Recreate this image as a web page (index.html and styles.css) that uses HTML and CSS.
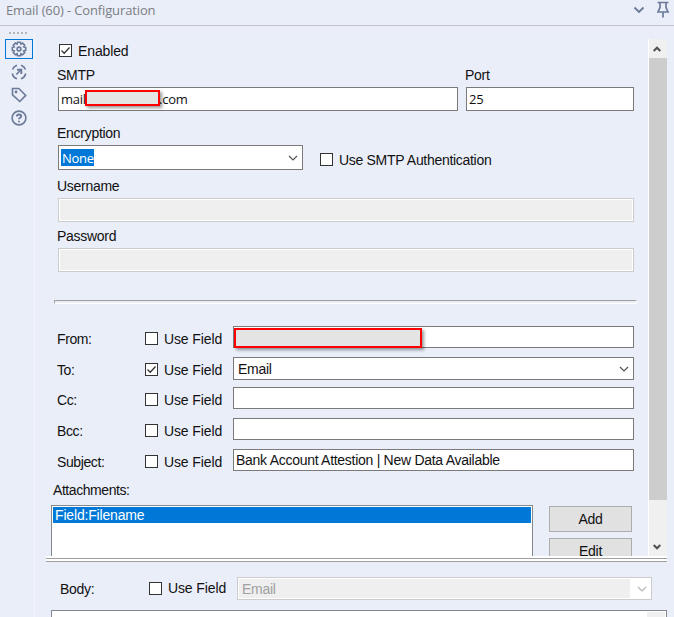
FILE: index.html
```html
<!DOCTYPE html>
<html lang="en">
<head>
<meta charset="utf-8">
<title>Email (60) - Configuration</title>
<link rel="stylesheet" href="styles.css">
</head>
<body>
<header class="titlebar">
  <span class="title">Email (60) - Configuration</span>
  <svg class="title-chevron" width="12" height="8" viewBox="0 0 12 8"><path d="M1.500 1.500 6 6l4.500-4.500"/></svg>
  <svg class="title-pin" width="14" height="18" viewBox="0 0 14 18"><path d="M1.500 2.500h11M4 3v4.500L2 12h10L10 7.500V3M7 12v5.500"/></svg>
</header>
<div class="window">
  <nav class="tools">
    <div class="grip"><i></i><i></i><i></i><i></i><i></i></div>
    <div class="tool active"><svg width="16" height="16" viewBox="0 0 16 16"><path d="M6.600 1.200h2.800l.5 1.900 1.700-1 2.100 2-1 1.700 2 .6v2.900l-2 .6 1 1.700-2.100 2.100-1.700-1-.5 2H6.600l-.5-2-1.700 1-2.100-2.100 1-1.700-2-.6V6.400l2-.6-1-1.700 2.100-2 1.700 1z"/><circle cx="8" cy="8" r="1.900"/></svg></div>
    <div class="tool"><svg width="16" height="16" viewBox="0 0 16 16"><path d="M6 1.200A7 7 0 0 0 1.500 5.500M10 1.200a7 7 0 0 1 4.500 4.300M1.300 9.500A7 7 0 0 0 6 14.700M14.700 9.500a7 7 0 0 1-4.700 5.200M5.300 10.500l4.500-4.500"/><path class="bold" d="M6 5.700h4.300V10"/></svg></div>
    <div class="tool"><svg width="16" height="16" viewBox="0 0 16 16"><path d="M1.500 1.500h6.300l6.900 6.900-5.900 6.100L1.500 7.800z"/><circle class="solid" cx="5" cy="5" r="1.400"/></svg></div>
    <div class="tool"><svg width="16" height="16" viewBox="0 0 16 16"><circle cx="8" cy="8" r="6.900"/><path class="bold" d="M5.900 6.500c0-2.800 4.300-2.600 4.300-.2 0 1.500-2.200 1.500-2.200 3M8 10.700v1.600"/></svg></div>
  </nav>
  <main class="content">
    <div class="pane">
      <form class="form">
        <div class="enabled-row">
          <span class="check"><svg viewBox="0 0 11 11"><path d="M1.500 5.500 4.200 8.200 9.500 2.500"/></svg></span><span class="check-label">Enabled</span>
        </div>
        <div class="server-row">
          <div class="group smtp">
            <label class="caption">SMTP</label>
            <div class="input tall ui-text"><span class="mail">mail</span><span>.com</span><span class="mask mask-host"></span></div>
          </div>
          <div class="group port">
            <label class="caption">Port</label>
            <div class="input tall ui-text digits">25</div>
          </div>
        </div>
        <div class="encryption-row">
          <div class="group encryption">
            <label class="caption">Encryption</label>
            <div class="input select ui-text"><span class="selected">None</span><svg class="arrow" viewBox="0 0 10 6"><path d="M1 1l4 4 4-4"/></svg></div>
          </div>
          <div class="auth"><span class="check"></span><span class="check-label">Use SMTP Authentication</span></div>
        </div>
        <div class="group username">
          <label class="caption">Username</label>
          <div class="input tall disabled"></div>
        </div>
        <div class="group password">
          <label class="caption">Password</label>
          <div class="input tall disabled"></div>
        </div>
        <div class="divider"></div>
        <div class="fields">
          <div class="field"><span class="name">From:</span><span class="check"></span><span class="check-label">Use Field</span><div class="input"><span class="mask mask-from"></span></div></div>
          <div class="field to"><span class="name">To:</span><span class="check"><svg viewBox="0 0 11 11"><path d="M1.500 5.500 4.200 8.200 9.500 2.500"/></svg></span><span class="check-label">Use Field</span><div class="input"><span class="value">Email</span><svg class="arrow" viewBox="0 0 10 6"><path d="M1 1l4 4 4-4"/></svg></div></div>
          <div class="field"><span class="name">Cc:</span><span class="check"></span><span class="check-label">Use Field</span><div class="input"></div></div>
          <div class="field"><span class="name">Bcc:</span><span class="check"></span><span class="check-label">Use Field</span><div class="input"></div></div>
          <div class="field"><span class="name">Subject:</span><span class="check"></span><span class="check-label">Use Field</span><div class="input"><span class="subject">Bank Account Attestion | New Data Available</span></div></div>
        </div>
        <div class="attachments-title">Attachments:</div>
        <div class="attachments">
          <div class="list"><div class="item">Field:Filename</div></div>
          <div class="buttons"><div class="button">Add</div><div class="button">Edit</div></div>
        </div>
      </form>
      <div class="scrollbar">
        <svg class="up" viewBox="0 0 8 6"><path d="M.700 5 4 1.700 7.300 5"/></svg>
        <div class="thumb"></div>
        <svg class="down" viewBox="0 0 8 6"><path d="M.700 1 4 4.300 7.300 1"/></svg>
      </div>
    </div>
    <div class="splitter"></div>
    <div class="body-row">
      <span class="name">Body:</span><span class="check"></span><span class="check-label">Use Field</span>
      <div class="body-select"><span class="body-value">Email</span><svg class="arrow" viewBox="0 0 10 6"><path d="M1 1l4 4 4-4"/></svg></div>
    </div>
    <div class="editor"><div class="editor-scroll"></div></div>
  </main>
</div>
</body>
</html>
```

FILE: styles.css
```css
* { box-sizing: border-box; }
body {
  margin: 0;
  width: 674px;
  height: 617px;
  overflow: hidden;
  background: #eaeef9;
  color: #111;
  font: 14px/20px "Liberation Sans", sans-serif;
  letter-spacing: -0.28px;
  white-space: nowrap;
}
svg { fill: none; display: block; flex: none; }

.titlebar {
  display: flex;
  height: 26px;
  padding-left: 6px;
  border-bottom: 1px solid #c3c5cb;
}
.title {
  width: 627px;
  color: #7b7d83;
  font: 13px/21px "Open Sans", sans-serif;
  letter-spacing: -0.13px;
}
.title-chevron { margin-top: 6px; stroke: #6b7a99; stroke-width: 1.9; }
.title-pin { margin: 0 0 0 11px; stroke: #6b7a99; stroke-width: 1.7; }

.window { display: flex; height: 591px; }
.tools {
  width: 35px;
  margin-top: 4px;
  padding: 2px 0 0 5px;
  border-right: 1px solid #f3f4fa;
}
.grip { display: flex; gap: 2px; height: 7px; padding-left: 4px; }
.grip i { width: 2px; height: 2px; background: #b5b5b5; }
.tool {
  display: flex;
  align-items: center;
  justify-content: center;
  width: 28px;
  height: 23px;
  stroke: #6b7a99;
  stroke-width: 1.6;
}
.tool.active { height: 20px; margin-bottom: 1px; border: 1px solid #0078d7; }
.bold { stroke-width: 1.9; }
.solid { fill: #6b7a99; stroke: none; }

.content { width: 639px; }
.pane { display: flex; height: 530px; overflow: hidden; }
.form { width: 613px; padding: 14px 0 0 16px; }

.check {
  flex: none;
  width: 13px;
  height: 13px;
  border: 1px solid #333;
  background: #fff;
}
.check svg { width: 11px; height: 11px; stroke: #333; stroke-width: 1.3; }
.check-label { margin-left: 6px; letter-spacing: -0.12px; }
.enabled-row { display: flex; align-items: center; height: 21px; margin: 0 0 4px 8px; }

.group { margin-left: 7px; }
.caption { display: block; height: 22px; margin-left: -1px; line-height: 21px; }
.input {
  position: relative;
  height: 22px;
  border: 1px solid #7a7a7a;
  background: #fff;
}
.input.tall { height: 24px; }
.ui-text { font: 13px/23px "Open Sans", sans-serif; letter-spacing: -0.25px; padding-left: 2px; }
.disabled { border-color: #ccc; background: #efefef; box-shadow: inset 0 0 0 1px #fff; }
.mask {
  position: absolute;
  border: 2px solid #f00;
  background: #e4e4e4;
  box-shadow: 2px 2px 3px rgba(0, 0, 0, 0.4);
}
.mask-host { left: 26px; top: 2px; width: 75px; height: 16px; }
.mask-from { left: 0; top: 1px; width: 188px; height: 20px; }

.server-row { display: flex; height: 58px; }
.smtp { width: 400px; }
.smtp .input { display: flex; }
.mail { width: 98px; }
.port { width: 168px; margin-left: 8px; }
.encryption-row { display: flex; height: 53px; }
.encryption { width: 245px; }
.select { display: flex; align-items: center; height: 25px; justify-content: space-between; padding-right: 4px; }
.selected { height: 17px; width: 33px; line-height: 18px; padding-left: 1px; margin-bottom: 1px; background: #0078d7; color: #fff; }
.arrow { width: 10px; height: 6px; stroke: #555; stroke-width: 1.2; }
.auth { display: flex; align-items: center; height: 13px; margin: 30px 0 0 17px; }
.auth .check-label { letter-spacing: -0.3px; }
.username, .password { width: 576px; }
.username { height: 50px; }
.password { height: 46px; }
.divider {
  width: 583px;
  height: 4px;
  margin: 28px 0 22px 3px;
  border: 1px solid #a0a0a0;
  border-right-color: #fff;
  border-bottom-color: #fff;
}

.fields { margin-left: 6px; width: 577px; }
.field { display: flex; height: 31px; }
.field.to { height: 30px; }
.field .name { width: 88px; padding-top: 3px; letter-spacing: -0.4px; }
.field .check { margin-top: 6px; }
.field .check-label { width: 69px; padding-top: 3px; }
.field .input { width: 401px; display: flex; line-height: 20px; }
.field.to .input { height: 23px; padding: 0 4px; justify-content: space-between; align-items: center; }
.subject { padding-left: 2px; }
.attachments-title { height: 25px; letter-spacing: -0.43px; margin: 0 0 0 2px; }
.attachments { display: flex; gap: 16px; }
.list { width: 482px; height: 80px; padding: 1px; border: 1px solid #828790; background: #fff; }
.item { height: 16px; padding-left: 2px; line-height: 17px; letter-spacing: -0.17px; background: #0078d7; color: #fff; }
.button {
  width: 83px;
  height: 26px;
  margin: 1px 0 6px;
  border: 1px solid #adadad;
  background: #e1e1e1;
  line-height: 25px;
  text-align: center;
}
.button + .button { margin-top: 6px; }

.scrollbar { width: 19px; height: 518px; margin-top: 13px; border-left: 1px solid #fff; background: #f0f0f0; }
.scrollbar svg { width: 8px; height: 6px; margin-left: 4px; stroke: #505050; stroke-width: 2; }
.up { margin-top: 7px; }
.thumb { height: 442px; margin: 6px 0 44px; background: #cdcdcd; }

.splitter {
  width: 621px;
  height: 6px;
  margin-left: 11px;
  border-top: 2px solid #fff;
  background: linear-gradient(#a0a0a0 1px, #fff 1px 3px, #a0a0a0 3px);
}
.body-row { display: flex; height: 38px; margin: 10px 0 0 25px; padding-top: 5px; }
.body-row .name { width: 89px; padding-top: 2px; }
.body-row .check { margin-top: 5px; }
.body-row .check-label { width: 69px; padding-top: 1px; }
.body-select {
  display: flex;
  align-items: center;
  width: 415px;
  height: 23px;
  padding: 0 4px;
  border: 1px solid #ccc;
  background: linear-gradient(to right, #efefef 392px, #fff 392px);
  box-shadow: inset 0 0 0 1px #fff;
  justify-content: space-between;
  color: #a0a0a0;
}
.body-select .arrow { stroke: #b5b5b5; }
.editor { width: 616px; height: 30px; margin-left: 16px; padding: 1px; border: 1px solid #828790; background: #fff; }
.editor-scroll { width: 18px; height: 28px; margin-left: auto; background: #f0f0f0; }
```
